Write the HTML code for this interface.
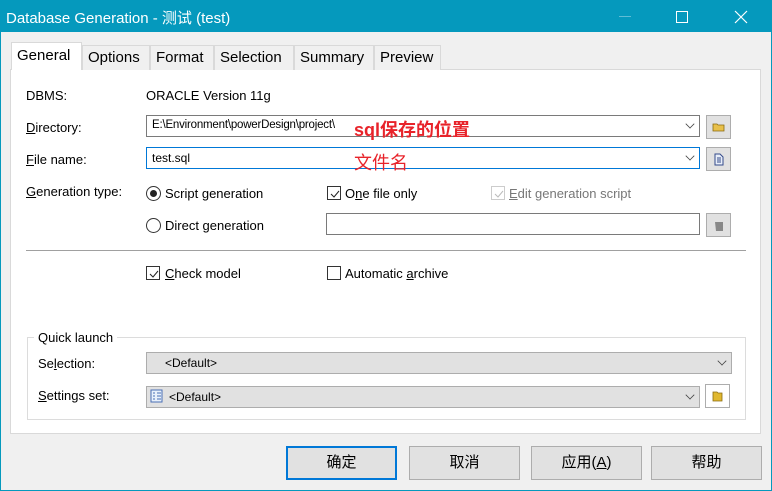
<!DOCTYPE html>
<html><head><meta charset="utf-8"><style>
*{box-sizing:border-box;margin:0;padding:0}
body{width:772px;height:491px;overflow:hidden;background:#0599bd;font-family:"Liberation Sans","Noto Sans CJK SC",sans-serif;font-size:13px;color:#000;position:relative}
.a{position:absolute}
.win{left:1px;top:32px;width:770px;height:458px;background:#f0f0f0}
.title{left:6px;top:7px;color:#fff;font-size:15px}
.panel{left:10px;top:69px;width:751px;height:365px;background:#fff;border:1px solid #d9d9d9}
.tab{top:45px;height:25px;background:#f0f0f0;border:1px solid #d9d9d9;border-bottom:none;font-size:15px;padding:3px 5px 0}
.lbl{font-size:13px}
.inp{background:#fff;border:1px solid #7a7a7a;height:22px;font-size:12px;padding:3px 5px}
.dd{position:absolute;right:5px;top:4px;width:8px;height:8px;border-right:1px solid #444;border-bottom:1px solid #444;transform:rotate(45deg) scale(.8)}
.btn{background:#e1e1e1;border:1px solid #adadad;width:25px;height:24px}
.cb{width:14px;height:14px;border:1px solid #333;background:#fff}
.cb svg{position:absolute;left:1px;top:1px}
.rd{width:15px;height:15px;border:1px solid #333;border-radius:50%;background:#fff}
.big{height:34px;width:111px;background:#e1e1e1;border:1px solid #adadad;font-size:15px;text-align:center;line-height:32px}
.red{color:#e8232a;font-size:18px;font-weight:bold}
</style></head><body>
<div class="a title">Database Generation - 测试 (test)</div>
<div class="a" style="left:619px;top:16px;width:12px;height:1px;background:#5fbdd6"></div>
<div class="a" style="left:676px;top:11px;width:12px;height:12px;border:1px solid #fff"></div>
<svg class="a" style="left:734px;top:10px" width="14" height="14"><path d="M1 1L13 13M13 1L1 13" stroke="#fff" stroke-width="1.2"/></svg>
<div class="a win"></div>
<div class="a panel"></div>
<div class="a tab" style="left:11px;top:42px;height:28px;background:#fff;width:71px;padding-top:4px">General</div>
<div class="a tab" style="left:82px;width:68px">Options</div>
<div class="a tab" style="left:150px;width:64px">Format</div>
<div class="a tab" style="left:214px;width:80px">Selection</div>
<div class="a tab" style="left:294px;width:80px">Summary</div>
<div class="a tab" style="left:374px;width:67px">Preview</div>
<div class="a lbl" style="left:26px;top:88px">DBMS:</div>
<div class="a lbl" style="left:146px;top:88px">ORACLE Version 11g</div>
<div class="a lbl" style="left:26px;top:120px"><u>D</u>irectory:</div>
<div class="a inp" style="left:146px;top:115px;width:554px;font-size:11.5px;letter-spacing:-.2px">E:\Environment\powerDesign\project\<span class="dd"></span></div>
<div class="a btn" style="left:706px;top:115px"><svg width="23" height="22"><path d="M6 8h4l1 1h6v6H6z" fill="#e8c04a" stroke="#8a6b10" stroke-width=".8"/></svg></div>
<div class="a red" style="left:354px;top:116px">sql保存的位置</div>
<div class="a lbl" style="left:26px;top:152px"><u>F</u>ile name:</div>
<div class="a inp" style="left:146px;top:147px;width:554px;border-color:#0078d7">test.sql<span class="dd"></span></div>
<div class="a btn" style="left:706px;top:147px"><svg width="23" height="22"><path d="M8 6h5l3 3v8H8z" fill="#e8eef8" stroke="#344a8a"/><path d="M10 10h4M10 12h4M10 14h4" stroke="#344a8a"/></svg></div>
<div class="a red" style="left:354px;top:149px;font-weight:normal">文件名</div>
<div class="a lbl" style="left:26px;top:184px"><u>G</u>eneration type:</div>
<div class="a rd" style="left:146px;top:186px"><div class="a" style="left:3px;top:3px;width:7px;height:7px;border-radius:50%;background:#222"></div></div>
<div class="a lbl" style="left:165px;top:186px">Script generation</div>
<div class="a cb" style="left:327px;top:186px"><svg width="12" height="12"><path d="M2 6l3 3 5-6" stroke="#222" fill="none"/></svg></div>
<div class="a lbl" style="left:345px;top:186px">O<u>n</u>e file only</div>
<div class="a cb" style="left:491px;top:186px;border-color:#ccc"><svg width="12" height="12"><path d="M2 6l3 3 5-6" stroke="#bbb" fill="none"/></svg></div>
<div class="a lbl" style="left:509px;top:186px;color:#777"><u>E</u>dit generation script</div>
<div class="a rd" style="left:146px;top:218px"></div>
<div class="a lbl" style="left:165px;top:218px">Direct generation</div>
<div class="a inp" style="left:326px;top:213px;width:374px"></div>
<div class="a btn" style="left:706px;top:213px"><svg width="23" height="22"><path d="M8 8h8v9H9z" fill="#888"/></svg></div>
<div class="a" style="left:26px;top:250px;width:720px;height:1px;background:#a0a0a0"></div>
<div class="a cb" style="left:146px;top:266px"><svg width="12" height="12"><path d="M2 6l3 3 5-6" stroke="#222" fill="none"/></svg></div>
<div class="a lbl" style="left:165px;top:266px"><u>C</u>heck model</div>
<div class="a cb" style="left:327px;top:266px"></div>
<div class="a lbl" style="left:345px;top:266px">Automatic <u>a</u>rchive</div>
<div class="a" style="left:27px;top:337px;width:719px;height:83px;border:1px solid #dcdcdc"></div>
<div class="a lbl" style="left:34px;top:330px;background:#fff;padding:0 4px">Quick launch</div>
<div class="a lbl" style="left:38px;top:356px">Se<u>l</u>ection:</div>
<div class="a inp" style="left:146px;top:352px;width:586px;background:#e1e1e1;border-color:#adadad;padding-left:18px">&lt;Default&gt;<span class="dd"></span></div>
<div class="a lbl" style="left:38px;top:388px"><u>S</u>ettings set:</div>
<div class="a inp" style="left:146px;top:386px;width:554px;background:#e1e1e1;border-color:#adadad;padding-left:22px">&lt;Default&gt;<span class="dd"></span></div>
<svg class="a" style="left:150px;top:389px" width="14" height="14"><rect x="1" y="1" width="11" height="12" fill="#e8f0fb" stroke="#4a6fb5"/><path d="M3 4h2M7 4h4M3 7h2M7 7h4M3 10h2M7 10h4" stroke="#4a6fb5"/></svg>
<div class="a btn" style="left:705px;top:384px;background:#fff"><svg width="23" height="22"><path d="M7 7h4l1 1h4v8H7z" fill="#e0b830" stroke="#8a6b10" stroke-width=".8"/></svg></div>
<div class="a big" style="left:286px;top:446px;border:2px solid #0078d7;line-height:30px">确定</div>
<div class="a big" style="left:409px;top:446px">取消</div>
<div class="a big" style="left:531px;top:446px">应用(<u>A</u>)</div>
<div class="a big" style="left:651px;top:446px">帮助</div>
</body></html>
